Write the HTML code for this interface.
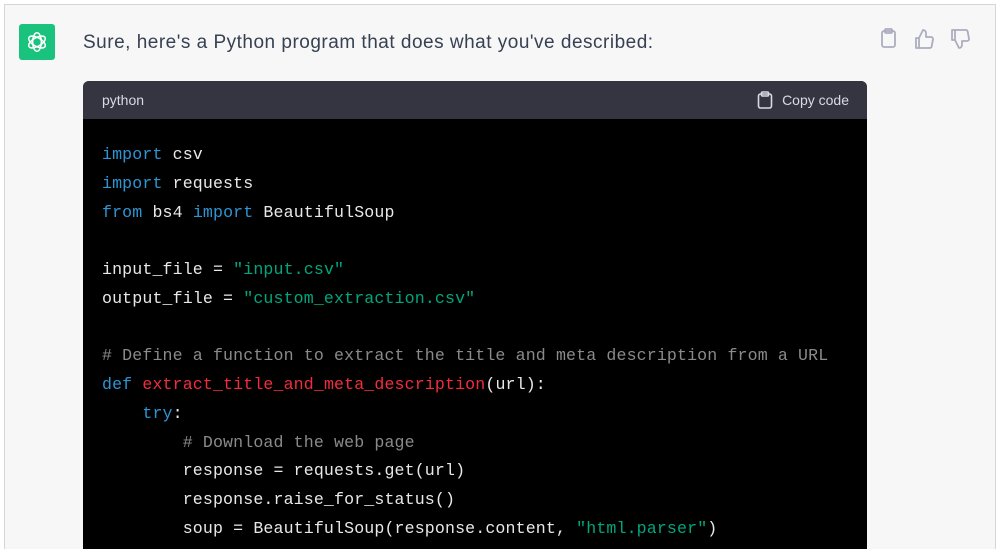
<!DOCTYPE html>
<html><head><style>
*{margin:0;padding:0;box-sizing:border-box}
body{width:1000px;height:553px;background:#fff;position:relative;overflow:hidden;font-family:"Liberation Sans",sans-serif}
.frame{position:absolute;left:4px;top:4px;width:992px;height:545px;background:#f7f7f8;border:1px solid #d6d6d8;border-bottom:none;overflow:hidden}
.logo{position:absolute;left:14px;top:19px;width:36px;height:36px;background:#19c37d;border-radius:3px;display:flex;align-items:center;justify-content:center}
.msg{position:absolute;left:78px;top:27px;font-size:19px;color:#374151;letter-spacing:0.5px}
.icons{position:absolute;left:874px;top:22px}
.code{position:absolute;left:78px;top:76px;width:784px;height:480px;background:#000;border-radius:6px 6px 0 0;overflow:hidden}
.hdr{height:38px;background:#343541;color:#d9d9e3;font-size:14px;display:flex;align-items:center;justify-content:space-between;padding:0 18px 0 19px}
.hdr span.c{display:flex;align-items:center;gap:9px;font-size:14px}
pre{font-family:"Liberation Mono",monospace;font-size:16.6px;letter-spacing:0.13px;line-height:28.75px;color:#e8e8e8;padding:22px 0 0 19px}
.k{color:#2e95d3}.s{color:#00a67d}.f{color:#f22c3d}.m{color:#8a8a8a}
</style></head><body>
<div class="frame">
<div class="logo"><svg width="26" height="26" viewBox="0 0 24 24" fill="none" stroke="#fff" stroke-width="1.4"><g transform="translate(12 12)"><ellipse rx="4" ry="8.5" transform="rotate(0)" /><ellipse rx="4" ry="8.5" transform="rotate(60)"/><ellipse rx="4" ry="8.5" transform="rotate(120)"/></g></svg></div>
<div class="msg">Sure, here's a Python program that does what you've described:</div>
<div class="icons"><svg width="110" height="24" viewBox="0 0 110 24" fill="none" stroke="#acacbe" stroke-width="1.8" stroke-linejoin="round" stroke-linecap="round">
<rect x="3" y="4" width="13" height="16" rx="2"/><rect x="6" y="2" width="7" height="4" rx="1"/>
<path d="M40 11l4-8a3 3 0 013 3v4h5a2 2 0 012 2.3l-1.3 7a2 2 0 01-2 1.7H40zM40 11h-3v10h3"/>
<path d="M76 13l4 8a3 3 0 003-3v-4h5a2 2 0 002-2.3l-1.3-7a2 2 0 00-2-1.7H76zM76 13h-3V3h3"/>
</svg></div>
<div class="code">
<div class="hdr"><span>python</span><span class="c"><svg width="16" height="18" viewBox="0 0 16 18" fill="none" stroke="#d9d9e3" stroke-width="1.6"><rect x="1.5" y="3" width="13" height="14" rx="2"/><rect x="4.5" y="1" width="7" height="4" rx="1"/></svg>Copy code</span></div>
<pre><span class="k">import</span> csv
<span class="k">import</span> requests
<span class="k">from</span> bs4 <span class="k">import</span> BeautifulSoup

input_file = <span class="s">"input.csv"</span>
output_file = <span class="s">"custom_extraction.csv"</span>

<span class="m"># Define a function to extract the title and meta description from a URL</span>
<span class="k">def</span> <span class="f">extract_title_and_meta_description</span>(url):
    <span class="k">try</span>:
        <span class="m"># Download the web page</span>
        response = requests.get(url)
        response.raise_for_status()
        soup = BeautifulSoup(response.content, <span class="s">"html.parser"</span>)
</pre>
</div>
</div>
</body></html>
